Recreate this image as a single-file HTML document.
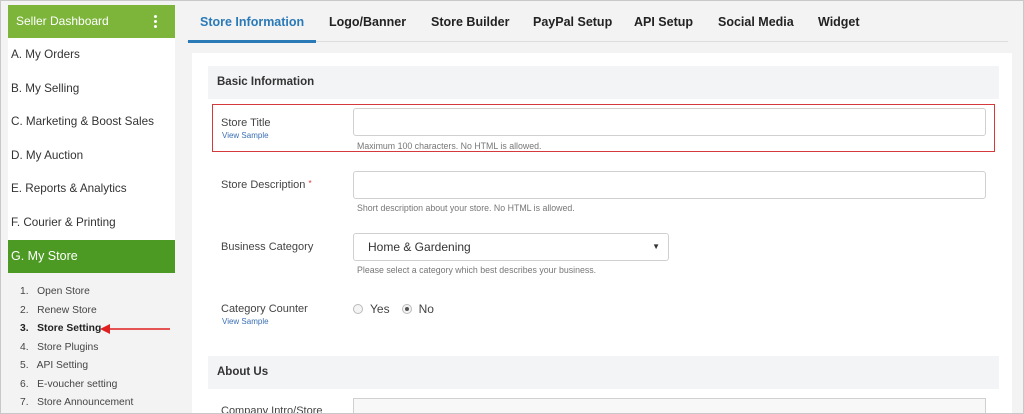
<!DOCTYPE html>
<html style="width:1024px;height:414px;overflow:hidden"><head><meta charset="utf-8"><style>
*{box-sizing:border-box;margin:0;padding:0}
body{width:1024px;height:414px;overflow:hidden;background:#f3f3f3;font-family:"Liberation Sans",sans-serif;position:relative;color:#333}
.frame{position:absolute;left:0;top:0;width:1024px;height:414px;border:1px solid #c8c8c8;pointer-events:none;z-index:10}
.a{position:absolute}
.side{left:8px;top:5px;width:167px}
.hdr{height:33px;background:#7cb53a;color:#fff;font-size:12px;line-height:33px;padding-left:8px;position:relative}
.dots{position:absolute;right:18px;top:10px;width:3px}
.dots i{display:block;width:3px;height:3px;background:#fff;border-radius:50%;margin-bottom:2px}
.it{height:33.6px;background:#fff;font-size:11.7px;line-height:33.6px;padding-left:3px;color:#333}
.act{background:#4c9a23;color:#fff;font-size:12.5px}
.sub{font-size:10.3px;color:#444;position:absolute;left:20px}
.tab{position:absolute;top:15px;font-size:12.5px;font-weight:bold;color:#222}
.panel{left:192px;top:53px;width:820px;height:361px;background:#fff;overflow:hidden}
.sec{position:absolute;left:16px;width:791px;height:33px;background:#f3f4f6;font-size:11.5px;font-weight:bold;line-height:33px;padding-left:9px;color:#333}
.lbl{position:absolute;left:29px;font-size:11px;color:#444}
.vs{position:absolute;left:30px;font-size:8px;color:#3b6fb5}
.inp{position:absolute;left:161px;width:633px;height:28px;border:1px solid #d0d0d0;border-radius:3px;background:#fff}
.help{position:absolute;left:165px;font-size:8.8px;color:#777}
</style></head><body>
<div class="frame"></div>
<div class="a side">
 <div class="hdr">Seller Dashboard<div class="dots"><i></i><i></i><i></i></div></div>
 <div class="it">A. My Orders</div>
 <div class="it">B. My Selling</div>
 <div class="it">C. Marketing &amp; Boost Sales</div>
 <div class="it">D. My Auction</div>
 <div class="it">E. Reports &amp; Analytics</div>
 <div class="it">F. Courier &amp; Printing</div>
 <div class="it act" style="height:33px;line-height:33px">G. My Store</div>
</div>
<div class="sub" style="top:286px">1.&nbsp;&nbsp; Open Store</div>
<div class="sub" style="top:304.5px">2.&nbsp;&nbsp; Renew Store</div>
<div class="sub" style="top:323px;font-weight:bold;color:#222">3.&nbsp;&nbsp; Store Setting</div>
<div class="sub" style="top:341.5px">4.&nbsp;&nbsp; Store Plugins</div>
<div class="sub" style="top:360px">5.&nbsp;&nbsp; API Setting</div>
<div class="sub" style="top:378.5px">6.&nbsp;&nbsp; E-voucher setting</div>
<div class="sub" style="top:397px">7.&nbsp;&nbsp; Store Announcement</div>
<svg class="a" style="left:100px;top:323px" width="72" height="12"><line x1="8" y1="6" x2="70" y2="6" stroke="#e02020" stroke-width="1.5"/><polygon points="0,6 10,1 10,11" fill="#e02020"/></svg>

<div class="a" style="left:187px;top:41px;width:821px;height:1px;background:#ddd"></div>
<div class="a" style="left:188px;top:40px;width:128px;height:3px;background:#2a7ab8"></div>
<div class="tab" style="left:200px;color:#2a7ab8">Store Information</div>
<div class="tab" style="left:329px">Logo/Banner</div>
<div class="tab" style="left:431px">Store Builder</div>
<div class="tab" style="left:533px">PayPal Setup</div>
<div class="tab" style="left:634px">API Setup</div>
<div class="tab" style="left:718px">Social Media</div>
<div class="tab" style="left:818px">Widget</div>

<div class="a panel">
 <div class="sec" style="top:13px">Basic Information</div>
 <div class="a" style="left:20px;top:51px;width:783px;height:48px;border:1px solid #d43a3a"></div>
 <div class="lbl" style="top:64px">Store Title</div>
 <div class="vs" style="top:78px">View Sample</div>
 <div class="inp" style="top:55px"></div>
 <div class="help" style="top:88px">Maximum 100 characters. No HTML is allowed.</div>

 <div class="lbl" style="top:126px">Store Description <span style="color:#d33;font-size:8px;vertical-align:top">*</span></div>
 <div class="inp" style="top:118px"></div>
 <div class="help" style="top:150px">Short description about your store. No HTML is allowed.</div>

 <div class="lbl" style="top:188px">Business Category</div>
 <div class="inp" style="top:180px;width:316px;font-size:12px;line-height:26px;padding-left:14px;color:#333">Home &amp; Gardening<span style="position:absolute;right:8px;top:0;font-size:8px">▼</span></div>
 <div class="help" style="top:212px">Please select a category which best describes your business.</div>

 <div class="lbl" style="top:250px">Category Counter</div>
 <div class="vs" style="top:264px">View Sample</div>
 <div class="a" style="left:161px;top:249px;font-size:12px;color:#444;display:flex;align-items:center">
  <span style="width:10px;height:10px;border:1px solid #bbb;border-radius:50%;background:#f4f4f4;display:inline-block"></span>
  <span style="margin-left:7px">Yes</span>
  <span style="margin-left:12px;width:10px;height:10px;border:1px solid #bbb;border-radius:50%;background:#f4f4f4;display:inline-flex;align-items:center;justify-content:center"><i style="width:4px;height:4px;border-radius:50%;background:#555"></i></span>
  <span style="margin-left:7px">No</span>
 </div>

 <div class="sec" style="top:303px">About Us</div>
 <div class="lbl" style="top:352px">Company Intro/Store</div>
 <div class="a" style="left:161px;top:345px;width:633px;height:30px;border:1px solid #d0d0d0;background:#f8f8f8"></div>
</div>
</body></html>
